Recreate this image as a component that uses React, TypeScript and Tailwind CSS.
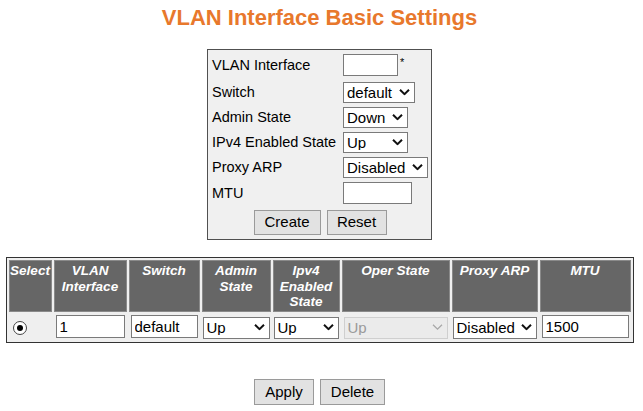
import type { ReactNode } from "react";

const font = { fontFamily: '"Liberation Sans", Arial, sans-serif' };

function Chevron({ disabled }: { disabled?: boolean }) {
  return (
    <svg
      width="11"
      height="7"
      viewBox="0 0 11 7"
      className="pointer-events-none absolute right-[5px] top-1/2 -translate-y-1/2"
    >
      <path
        d="M1 1.2 L5.5 5.6 L10 1.2"
        fill="none"
        stroke={disabled ? "#a8a8a8" : "#111"}
        strokeWidth={disabled ? 1.3 : 2}
      />
    </svg>
  );
}

function Select({
  value,
  className,
  disabled,
}: {
  value: string;
  className: string;
  disabled?: boolean;
}) {
  return (
    <div className={`relative ${className}`}>
      <select
        disabled={disabled}
        defaultValue={value}
        className={`h-full w-full appearance-none border pl-[3px] text-[15px] leading-none outline-none ${
          disabled
            ? "border-[#cfcfcf] bg-[#ebebeb] text-[#9a9a9a]"
            : "border-[#7a7a7a] bg-white text-black"
        }`}
        style={font}
      >
        <option>{value}</option>
      </select>
      <Chevron disabled={disabled} />
    </div>
  );
}

function TextBox({ value, className }: { value?: string; className: string }) {
  return (
    <input
      defaultValue={value}
      className={`border border-[#7a7a7a] bg-white px-[3px] text-[15px] leading-none text-black outline-none ${className}`}
      style={font}
    />
  );
}

function Button({ children, className }: { children: ReactNode; className: string }) {
  return (
    <button
      type="button"
      className={`border border-[#9a9a9a] bg-[#e2e2e2] text-[15px] text-black ${className}`}
      style={font}
    >
      {children}
    </button>
  );
}

function FormRow({ label, h, children }: { label: string; h: string; children: ReactNode }) {
  return (
    <div className={`flex items-center ${h}`}>
      <span className="mt-[2px] w-[131px] text-[14.5px] text-black">{label}</span>
      <div className="flex items-start">{children}</div>
    </div>
  );
}

const headers = [
  { label: "Select", w: "w-[43px]" },
  { label: "VLAN Interface", w: "w-[73px]" },
  { label: "Switch", w: "w-[71px]" },
  { label: "Admin State", w: "w-[69px]" },
  { label: "Ipv4 Enabled State", w: "w-[67px]" },
  { label: "Oper State", w: "w-[108px]" },
  { label: "Proxy ARP", w: "w-[86px]" },
  { label: "MTU", w: "w-[91px]" },
];

export default function App() {
  return (
    <div className="min-h-[411px] w-[643px] bg-white" style={font}>
      <div className="flex w-[639px] flex-col items-center pt-[5px]">
        <h1 className="text-[22px] font-bold leading-[26px] text-[#e8782c]">
          VLAN Interface Basic Settings
        </h1>

        <div className="mt-[18px] w-[225px] border border-[#505050] bg-[#f0f0f0] pb-[4px] pl-[4px] pr-[3px] pt-[1px]">
          <FormRow label="VLAN Interface" h="h-[28px]">
            <TextBox className="h-[22px] w-[55px]" />
            <span className="ml-[2px] mt-[3px] text-[11px] leading-none">*</span>
          </FormRow>
          <FormRow label="Switch" h="h-[25px]">
            <Select value="default" className="h-[21px] w-[72px]" />
          </FormRow>
          <FormRow label="Admin State" h="h-[25px]">
            <Select value="Down" className="h-[21px] w-[65px]" />
          </FormRow>
          <FormRow label="IPv4 Enabled State" h="h-[25px]">
            <Select value="Up" className="h-[21px] w-[65px]" />
          </FormRow>
          <FormRow label="Proxy ARP" h="h-[25px]">
            <Select value="Disabled" className="h-[21px] w-[85px]" />
          </FormRow>
          <FormRow label="MTU" h="h-[28px]">
            <TextBox className="h-[22px] w-[69px]" />
          </FormRow>
          <div className="mt-[3px] flex justify-center gap-[6px]">
            <Button className="h-[25px] w-[67px]">Create</Button>
            <Button className="h-[25px] w-[60px]">Reset</Button>
          </div>
        </div>

        <table className="mt-[17px] w-[628px] table-fixed border-separate border-spacing-[2px] border border-[#333] bg-[#efefef]">
          <thead>
            <tr>
              {headers.map((h) => (
                <th
                  key={h.label}
                  className={`${h.w} h-[52px] border border-[#8a8a8a] bg-[#666] px-0 pt-[2px] align-top text-[13.5px] font-bold italic leading-[15.5px] text-white`}
                >
                  {h.label}
                </th>
              ))}
            </tr>
          </thead>
          <tbody>
            <tr className="h-[26px]">
              <td className="pl-[4px] text-left align-middle">
                <span className="inline-flex h-[14px] w-[14px] items-center justify-center rounded-full border border-[#444] bg-white align-middle">
                  <span className="h-[6px] w-[6px] rounded-full bg-black" />
                </span>
              </td>
              <td className="px-[2px]">
                <TextBox value="1" className="h-[23px] w-full" />
              </td>
              <td className="px-[2px]">
                <TextBox value="default" className="h-[23px] w-full" />
              </td>
              <td className="px-[1px]">
                <Select value="Up" className="h-[22px] w-full" />
              </td>
              <td className="px-[1px]">
                <Select value="Up" className="h-[22px] w-full" />
              </td>
              <td className="px-[2px]">
                <Select value="Up" disabled className="h-[22px] w-full" />
              </td>
              <td className="px-[1px]">
                <Select value="Disabled" className="h-[22px] w-full" />
              </td>
              <td className="px-[2px]">
                <TextBox value="1500" className="h-[23px] w-full" />
              </td>
            </tr>
          </tbody>
        </table>

        <div className="mt-[36px] flex gap-[6px]">
          <Button className="h-[26px] w-[60px]">Apply</Button>
          <Button className="h-[26px] w-[65px]">Delete</Button>
        </div>
      </div>
    </div>
  );
}
